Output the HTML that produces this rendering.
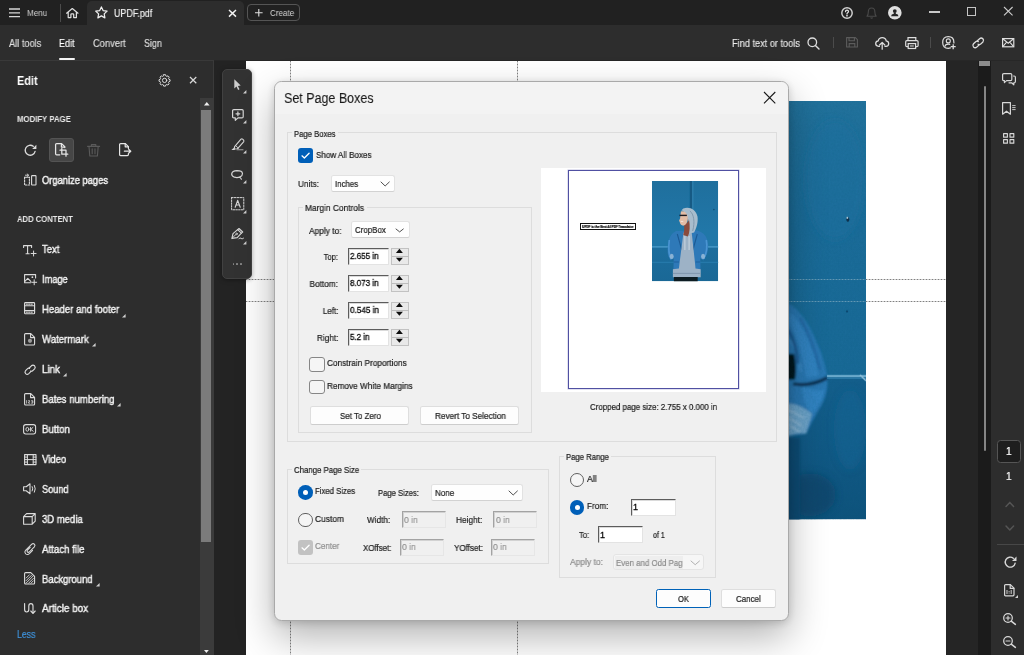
<!DOCTYPE html>
<html>
<head>
<meta charset="utf-8">
<title>Set Page Boxes</title>
<style>
*{box-sizing:border-box;margin:0;padding:0}
html,body{width:1024px;height:655px;overflow:hidden;background:#1f1f1f;font-family:"Liberation Sans",sans-serif;}
.abs{position:absolute}
#app{position:relative;width:1024px;height:655px;overflow:hidden;background:#1f1f1f}
.t{position:absolute;white-space:nowrap;line-height:1;color:#e6e6e6;will-change:transform}
svg{position:absolute;overflow:visible}
/* ---------- title bar ---------- */
#titlebar{left:0;top:0;width:1024px;height:25px;background:#212121}
#tab{left:87px;top:1px;width:157px;height:25px;background:#2d2d2d;border-radius:5px 5px 0 0}
#toolbar{left:0;top:25px;width:1024px;height:35px;background:#2d2d2d}
#tbline{left:0;top:60px;width:1024px;height:1px;background:linear-gradient(90deg,#393939 0,#393939 214px,#272727 214px,#272727 100%)}
/* ---------- left panel ---------- */
#left{left:0;top:61px;width:214px;height:594px;background:#2d2d2d;border-right:1px solid #3a3a3a}
#lscroll{left:200px;top:98px;width:14px;height:557px;background:#3b3b3b}
#lthumb{left:201px;top:110px;width:10px;height:432px;background:#7b7b7b}
.li{font-size:11px;color:#ececec;-webkit-text-stroke:0.25px #ececec}
.hd{font-size:9px;font-weight:bold;color:#e0e0e0;letter-spacing:0.1px}
/* ---------- document ---------- */
#gap{left:214px;top:61px;width:32px;height:594px;background:#232323}
#page{left:246px;top:61px;width:700px;height:594px;background:#fff}
#rgap{left:946px;top:61px;width:45px;height:594px;background:#252525}
#rtrack{left:978px;top:61px;width:13px;height:594px;background:#1b1b1b}
#rrail{left:991px;top:61px;width:33px;height:594px;background:#2d2d2d}
/* ---------- floating tools ---------- */
#ftools{left:222px;top:69px;width:30px;height:210px;background:#323232;border:1px solid #414141;border-radius:5px;box-shadow:0 1px 5px rgba(0,0,0,.35)}
/* ---------- dialog ---------- */
#dlg{left:274.4px;top:81px;width:514.2px;height:540px;background:#f0f0f0;border-radius:7.5px;border:1px solid #a9a9a9;box-shadow:0 16px 38px rgba(0,0,0,.30),0 2px 8px rgba(0,0,0,.16)}
#dlgtitle{left:0;top:0;width:512.2px;height:32px;background:#f3f3f3;border-radius:7px 7px 0 0}
.d{position:absolute;white-space:nowrap;line-height:1;color:#1a1a1a;font-size:9px}
.grp{border:1px solid #dddddd}
.inp{background:#fff;border:1px solid #e3e3e3;border-top-color:#5c5c5c;border-left-color:#5c5c5c;box-shadow:inset 1px 1px 0 #dadada}
.inp.dis{background:#f0f0f0;border-color:#e6e6e6;border-top-color:#a3a3a3;border-left-color:#a3a3a3;box-shadow:inset 1px 1px 0 #d2d2d2}
.sel{background:#fefefe;border:1px solid #e2e2e2;border-bottom-color:#d2d2d2;border-radius:2.5px}
.btn{background:#fdfdfd;border:1px solid #dedede;border-bottom-color:#cdcdcd;border-radius:2.5px}
.cb{border:1px solid #868686;border-radius:3px;background:#f5f5f5}
.spin{background:#e9e9e9;border:1px solid #c2c2c2}
</style>
</head>
<body>
<div id="app">
<!-- CHROME -->
<div id="titlebar" class="abs"></div>
<div id="tab" class="abs"></div>
<div id="toolbar" class="abs"></div>
<div id="tbline" class="abs"></div>
<div id="left" class="abs"></div>
<div id="lscroll" class="abs"></div>
<div id="lthumb" class="abs"></div>
<div id="gap" class="abs"></div>
<div id="page" class="abs"></div>
<div id="rgap" class="abs"></div>
<div id="rtrack" class="abs"></div>
<div id="rrail" class="abs"></div>
<svg style="left:9.40px;top:8.00px;" width="11" height="10" viewBox="0 0 11 10"><path d="M0 1 H11 M0 4.8 H11 M0 8.6 H11" stroke="#d6d6d6" stroke-width="1.3" fill="none"/></svg>
<div class="t" style="font-size:9.2px;color:#cfcfcf;top:9.01px;left:26.60px;transform-origin:0 50%;transform:scaleX(0.8821);">Menu</div>
<div class="abs " style="left:60.20px;top:4.40px;width:1.00px;height:17.20px;background:#4b4b4b"></div>
<svg style="left:65.60px;top:7.60px;" width="12.6" height="10.2" viewBox="0 0 12.6 10.2"><path d="M0.6 5.2 L6.3 0.6 L12 5.2 M2.2 4.2 V9.6 H4.9 V6.6 Q4.9 5.8 5.7 5.8 H6.9 Q7.7 5.8 7.7 6.6 V9.6 H10.4 V4.2" stroke="#dedede" stroke-width="1.25" fill="none" stroke-linejoin="round" stroke-linecap="round"/></svg>
<svg style="left:95.30px;top:6.40px;" width="12.8" height="12.4" viewBox="0 0 12.8 12.4"><path d="M6.4 0.9 L8.1 4.6 L12.1 5.1 L9.2 7.9 L9.9 11.9 L6.4 9.9 L2.9 11.9 L3.6 7.9 L0.7 5.1 L4.7 4.6 Z" stroke="#f0f0f0" stroke-width="1.25" fill="none" stroke-linejoin="round"/></svg>
<div class="t" style="font-size:10.2px;color:#f2f2f2;top:8.97px;left:114.00px;transform-origin:0 50%;transform:scaleX(0.8774);-webkit-text-stroke:0.15px #f2f2f2;">UPDF.pdf</div>
<svg style="left:228.80px;top:9.50px;" width="7" height="6.6" viewBox="0 0 7 6.6"><path d="M0 0 L7 6.6 M7 0 L0 6.6" stroke="#f0f0f0" stroke-width="1.5" fill="none"/></svg>
<div class="abs " style="left:247.20px;top:4.20px;width:53.10px;height:17.30px;border:1px solid #555;border-radius:4px;background:#212121"></div>
<svg style="left:254.70px;top:9.00px;" width="7.6" height="7.6" viewBox="0 0 7.6 7.6"><path d="M3.8 0 V7.6 M0 3.8 H7.6" stroke="#e0e0e0" stroke-width="1.1" fill="none"/></svg>
<div class="t" style="font-size:9.2px;color:#d6d6d6;top:9.01px;left:269.80px;transform-origin:0 50%;transform:scaleX(0.8764);">Create</div>
<svg style="left:840.90px;top:6.80px;" width="12" height="12" viewBox="0 0 12 12"><circle cx="6" cy="6" r="5.2" stroke="#d2d2d2" stroke-width="1.45" fill="none"/><path d="M4.5 4.7 Q4.5 3.2 6 3.2 Q7.5 3.2 7.5 4.5 Q7.5 5.3 6.6 5.8 Q6 6.2 6 6.9" stroke="#e2e2e2" stroke-width="1.3" fill="none" stroke-linecap="round"/><circle cx="6" cy="8.7" r="0.85" fill="#e2e2e2"/></svg>
<svg style="left:865.60px;top:7.00px;" width="11.2" height="12" viewBox="0 0 11.2 12"><path d="M1 9.2 Q2.3 8.2 2.3 5 Q2.3 1 5.6 1 Q8.9 1 8.9 5 Q8.9 8.2 10.2 9.2 Z" stroke="#4a4a4a" stroke-width="1.1" fill="none" stroke-linejoin="round"/><path d="M4.5 10.6 Q5.6 11.6 6.7 10.6" stroke="#4a4a4a" stroke-width="1.1" fill="none"/></svg>
<svg style="left:888.10px;top:5.70px;" width="13.6" height="13.6" viewBox="0 0 13.6 13.6"><circle cx="6.8" cy="6.8" r="6.8" fill="#e0e0e0"/><circle cx="6.8" cy="5.1" r="1.9" fill="#262626"/><path d="M5.8 6.4 H7.8 V7.7 Q10.5 8.1 10.5 10.2 H3.1 Q3.1 8.1 5.8 7.7 Z" fill="#262626"/></svg>
<div class="abs " style="left:929.30px;top:11.00px;width:11.00px;height:1.50px;background:#c8c8c8"></div>
<div class="abs " style="left:967.10px;top:6.60px;width:9.00px;height:9.00px;border:1.1px solid #c4c4c4"></div>
<svg style="left:1003.80px;top:7.30px;" width="8.6" height="8.4" viewBox="0 0 8.6 8.4"><path d="M0 0 L8.6 8.4 M8.6 0 L0 8.4" stroke="#cccccc" stroke-width="1.1" fill="none"/></svg>

<div class="t" style="font-size:10.2px;color:#e2e2e2;top:38.97px;left:9.00px;transform-origin:0 50%;transform:scaleX(0.9072);-webkit-text-stroke:0.12px #e2e2e2;">All tools</div>
<div class="t" style="font-size:10.2px;color:#ffffff;top:38.97px;left:59.40px;transform-origin:0 50%;transform:scaleX(0.8875);-webkit-text-stroke:0.12px #ffffff;">Edit</div>
<div class="abs " style="left:59.40px;top:58.00px;width:15.40px;height:2.20px;background:#f4f4f4;border-radius:1px"></div>
<div class="t" style="font-size:10.2px;color:#e2e2e2;top:38.97px;left:93.00px;transform-origin:0 50%;transform:scaleX(0.9184);-webkit-text-stroke:0.12px #e2e2e2;">Convert</div>
<div class="t" style="font-size:10.2px;color:#e2e2e2;top:38.97px;left:143.80px;transform-origin:0 50%;transform:scaleX(0.8768);-webkit-text-stroke:0.12px #e2e2e2;">Sign</div>
<div class="t" style="font-size:10.2px;color:#ececec;top:38.97px;left:731.70px;transform-origin:0 50%;transform:scaleX(0.9019);-webkit-text-stroke:0.12px #ececec;">Find text or tools</div>
<svg style="left:806.60px;top:36.60px;" width="13" height="13" viewBox="0 0 13 13"><circle cx="5.3" cy="5.3" r="4.3" stroke="#dedede" stroke-width="1.3" fill="none"/><path d="M8.4 8.4 L12 12" stroke="#dedede" stroke-width="1.4" stroke-linecap="round"/></svg>
<div class="abs " style="left:832.80px;top:36.70px;width:1.00px;height:11.40px;background:#4b4b4b"></div>
<svg style="left:845.80px;top:37.20px;" width="12" height="10.6" viewBox="0 0 12 10.6"><path d="M0.6 0.6 H9.4 L11.4 2.6 V10 H0.6 Z" stroke="#5c5c5c" stroke-width="1.1" fill="none" stroke-linejoin="round"/><path d="M3 0.8 V3.8 H8.4 V0.8 M3.2 10 V6.6 H8.8 V10" stroke="#5c5c5c" stroke-width="1.1" fill="none"/></svg>
<svg style="left:874.60px;top:37.20px;" width="14.4" height="12.6" viewBox="0 0 14.4 12.6"><path d="M4.4 9.4 H3.6 Q0.7 9.2 0.7 6.6 Q0.7 4.2 3.2 3.9 Q4 0.7 7.2 0.7 Q10.6 0.7 11.2 3.9 Q13.7 4.3 13.7 6.7 Q13.7 9.2 11 9.4 H10" stroke="#dedede" stroke-width="1.25" fill="none" stroke-linecap="round"/><path d="M7.2 12.2 V5.6 M4.6 8 L7.2 5.4 L9.8 8" stroke="#dedede" stroke-width="1.25" fill="none" stroke-linecap="round" stroke-linejoin="round"/></svg>
<svg style="left:904.90px;top:36.70px;" width="13.8" height="12.2" viewBox="0 0 13.8 12.2"><path d="M3 3.6 V0.7 H10.8 V3.6" stroke="#dedede" stroke-width="1.2" fill="none"/><rect x="0.7" y="3.6" width="12.4" height="6" rx="1.2" stroke="#dedede" stroke-width="1.2" fill="none"/><rect x="3.2" y="6.6" width="7.4" height="4.9" fill="#2d2d2d" stroke="#dedede" stroke-width="1.2"/><path d="M5 9 H8.8" stroke="#dedede" stroke-width="1"/></svg>
<div class="abs " style="left:929.60px;top:36.70px;width:1.00px;height:11.40px;background:#4b4b4b"></div>
<svg style="left:941.70px;top:36.30px;" width="13.6" height="13" viewBox="0 0 13.6 13"><path d="M8.4 11.9 Q7.4 12.3 6.3 12.3 Q0.7 12.3 0.7 6.5 Q0.7 0.7 6.3 0.7 Q11.9 0.7 11.9 6.5 V6.9" stroke="#dedede" stroke-width="1.2" fill="none" stroke-linecap="round"/><circle cx="6.3" cy="4.9" r="2" stroke="#dedede" stroke-width="1.1" fill="none"/><path d="M2.9 10.8 Q3.1 8.1 6.3 8.1 Q7.4 8.1 8.2 8.6" stroke="#dedede" stroke-width="1.1" fill="none"/><path d="M11.2 8.2 V13.2 M8.7 10.7 H13.7" stroke="#dedede" stroke-width="1.3"/></svg>
<svg style="left:972.30px;top:37.00px;" width="12.4" height="11.8" viewBox="0 0 12.4 11.8"><g stroke="#dedede" stroke-width="1.3" fill="none" stroke-linecap="round"><path d="M5.4 3.8 L7.6 1.7 Q9.3 0.3 10.9 1.8 Q12.3 3.4 10.9 5 L8.7 7.1 Q7.4 8.1 6.1 7.2"/><path d="M7 8 L4.8 10.1 Q3.1 11.5 1.5 10 Q0.1 8.4 1.5 6.8 L3.7 4.7 Q5 3.7 6.3 4.6"/></g></svg>
<svg style="left:1002.00px;top:37.50px;" width="12.4" height="9.4" viewBox="0 0 12.4 9.4"><rect x="0.6" y="0.6" width="11.2" height="8.2" stroke="#dedede" stroke-width="1.2" fill="none"/><path d="M0.8 0.8 L6.2 5.2 L11.6 0.8 M0.8 8.6 L4.6 4.2 M11.6 8.6 L7.8 4.2" stroke="#dedede" stroke-width="1.1" fill="none"/></svg>

<div class="t" style="font-size:12.0px;color:#ffffff;top:74.84px;left:17.20px;transform-origin:0 50%;transform:scaleX(0.9089);font-weight:bold;">Edit</div>
<svg style="left:158.20px;top:74.10px;" width="13.2" height="12.8" viewBox="-1.2 -0.2 15 15.4"><g stroke="#d8d8d8" stroke-width="1.2" fill="none" stroke-linecap="round" stroke-linejoin="round"><path d="M5.2 0.6 H7.4 L7.8 2.1 L9 2.7 L10.4 2 L11.9 3.6 L11.1 5 L11.5 6.2 L12.9 6.7 V8.5 L11.5 9 L11 10.2 L11.8 11.6 L10.3 13.1 L8.9 12.4 L7.8 12.9 L7.4 14.4 H5.2 L4.8 12.9 L3.6 12.4 L2.3 13.1 L0.8 11.6 L1.5 10.2 L1 9 L-0.4 8.5 V6.7 L1 6.2 L1.5 5 L0.8 3.6 L2.3 2 L3.6 2.7 L4.8 2.1 Z" /><circle cx="6.3" cy="7.5" r="2.6"/></g></svg>
<svg style="left:190.00px;top:77.10px;" width="6.3" height="6.3" viewBox="0 0 6.3 6.3"><path d="M0 0 L6.3 6.3 M6.3 0 L0 6.3" stroke="#d8d8d8" stroke-width="1.2" fill="none"/></svg>
<div class="t" style="font-size:8.8px;color:#e8e8e8;top:115.45px;left:17.20px;transform-origin:0 50%;transform:scaleX(0.8850);font-weight:bold;">MODIFY PAGE</div>
<svg style="left:23.50px;top:144.30px;" width="12.6" height="12" viewBox="0 0 12.6 12"><g stroke="#dcdcdc" stroke-width="1.3" fill="none" stroke-linecap="round" stroke-linejoin="round"><path d="M11.1 7.4 A5 5 0 1 1 9.3 2.3"/></g><path d="M8.2 4.9 L12.4 0.7 V4.9 Z" fill="#dcdcdc"/></svg>
<div class="abs " style="left:48.70px;top:138.00px;width:25.20px;height:23.70px;background:#464646;border:1px solid #545454;border-radius:3px"></div>
<svg style="left:55.00px;top:142.80px;" width="13.2" height="13.8" viewBox="0 0 13.2 13.8"><g stroke="#e6e6e6" stroke-width="1.25" fill="none" stroke-linecap="round" stroke-linejoin="round"><path d="M4.8 11.8 H1.6 Q0.6 11.8 0.6 10.8 V1.6 Q0.6 0.6 1.6 0.6 H6.6 L9.8 3.8 V4.6"/><path d="M6.4 0.8 V4 H9.6"/><path d="M6.8 5.4 V11.2 H12.8 M5 7.2 H11 V13.2" stroke-width="1.25"/></g></svg>
<svg style="left:86.50px;top:143.50px;" width="13.2" height="12.6" viewBox="0 0 13.2 12.6"><g stroke="#5a5a5a" stroke-width="1.1" fill="none" stroke-linecap="round" stroke-linejoin="round"><path d="M0.6 2.4 H12.6 M4.4 2.2 V0.6 H8.8 V2.2 M2 2.6 L2.8 12 H10.4 L11.2 2.6 M5.2 4.8 V9.8 M8 4.8 V9.8"/></g></svg>
<svg style="left:119.00px;top:142.80px;" width="12.8" height="13.2" viewBox="0 0 12.8 13.2"><g stroke="#e6e6e6" stroke-width="1.2" fill="none" stroke-linecap="round" stroke-linejoin="round"><path d="M9.4 10.6 V11.6 Q9.4 12.6 8.4 12.6 H1.6 Q0.6 12.6 0.6 11.6 V1.6 Q0.6 0.6 1.6 0.6 H6.4 L9.4 3.6 V5.6"/><path d="M6.2 0.8 V3.8 H9.2"/><path d="M5.4 8.2 H11.6 M9.8 6.4 L11.8 8.2 L9.8 10" stroke-width="1.25"/></g></svg>
<svg style="left:23.50px;top:174.30px;" width="12.6" height="11.6" viewBox="0 0 12.6 11.6"><g stroke="#dcdcdc" stroke-width="1.1" fill="none" stroke-linecap="round" stroke-linejoin="round"><rect x="7.6" y="1.6" width="4.4" height="9.4" rx="0.6"/><path d="M0.6 3.4 V11 H5.4 V3.4" stroke-dasharray="1.5 1.3"/><path d="M0.6 3.2 H5.4"/><path d="M1.4 1.2 H4.4 M3.2 0 L4.6 1.2 L3.2 2.4" stroke-width="0.9"/></g></svg>
<div class="t" style="font-size:10.4px;color:#f4f4f4;top:176.00px;left:42.00px;transform-origin:0 50%;transform:scaleX(0.8989);-webkit-text-stroke:0.45px #f4f4f4;">Organize pages</div>
<div class="t" style="font-size:8.8px;color:#e8e8e8;top:215.15px;left:17.20px;transform-origin:0 50%;transform:scaleX(0.8713);font-weight:bold;">ADD CONTENT</div>
<div class="t" style="font-size:10.4px;color:#f4f4f4;top:245.30px;left:42.40px;transform-origin:0 50%;transform:scaleX(0.9123);-webkit-text-stroke:0.4px #f4f4f4;">Text</div>
<div class="t" style="font-size:10.4px;color:#f4f4f4;top:275.10px;left:42.40px;transform-origin:0 50%;transform:scaleX(0.8926);-webkit-text-stroke:0.4px #f4f4f4;">Image</div>
<div class="t" style="font-size:10.4px;color:#f4f4f4;top:305.20px;left:42.40px;transform-origin:0 50%;transform:scaleX(0.9220);-webkit-text-stroke:0.4px #f4f4f4;">Header and footer</div>
<svg style="left:122.40px;top:313.60px;" width="3.5999999999999943" height="3.599999999999966" viewBox="0 0 3.5999999999999943 3.599999999999966"><path d="M3.5999999999999943 0 V3.599999999999966 H0 Z" fill="#d0d0d0"/></svg>
<div class="t" style="font-size:10.4px;color:#f4f4f4;top:334.80px;left:42.40px;transform-origin:0 50%;transform:scaleX(0.9274);-webkit-text-stroke:0.4px #f4f4f4;">Watermark</div>
<svg style="left:91.70px;top:343.20px;" width="3.5999999999999943" height="3.599999999999966" viewBox="0 0 3.5999999999999943 3.599999999999966"><path d="M3.5999999999999943 0 V3.599999999999966 H0 Z" fill="#d0d0d0"/></svg>
<div class="t" style="font-size:10.4px;color:#f4f4f4;top:365.00px;left:42.40px;transform-origin:0 50%;transform:scaleX(0.9487);-webkit-text-stroke:0.4px #f4f4f4;">Link</div>
<svg style="left:62.60px;top:373.40px;" width="3.6000000000000014" height="3.599999999999966" viewBox="0 0 3.6000000000000014 3.599999999999966"><path d="M3.6000000000000014 0 V3.599999999999966 H0 Z" fill="#d0d0d0"/></svg>
<div class="t" style="font-size:10.4px;color:#f4f4f4;top:395.00px;left:42.40px;transform-origin:0 50%;transform:scaleX(0.9233);-webkit-text-stroke:0.4px #f4f4f4;">Bates numbering</div>
<svg style="left:117.20px;top:403.40px;" width="3.5999999999999943" height="3.599999999999966" viewBox="0 0 3.5999999999999943 3.599999999999966"><path d="M3.5999999999999943 0 V3.599999999999966 H0 Z" fill="#d0d0d0"/></svg>
<div class="t" style="font-size:10.4px;color:#f4f4f4;top:424.80px;left:42.40px;transform-origin:0 50%;transform:scaleX(0.9279);-webkit-text-stroke:0.4px #f4f4f4;">Button</div>
<div class="t" style="font-size:10.4px;color:#f4f4f4;top:454.70px;left:42.40px;transform-origin:0 50%;transform:scaleX(0.9238);-webkit-text-stroke:0.4px #f4f4f4;">Video</div>
<div class="t" style="font-size:10.4px;color:#f4f4f4;top:484.70px;left:42.40px;transform-origin:0 50%;transform:scaleX(0.8812);-webkit-text-stroke:0.4px #f4f4f4;">Sound</div>
<div class="t" style="font-size:10.4px;color:#f4f4f4;top:514.70px;left:42.40px;transform-origin:0 50%;transform:scaleX(0.9144);-webkit-text-stroke:0.4px #f4f4f4;">3D media</div>
<div class="t" style="font-size:10.4px;color:#f4f4f4;top:544.50px;left:42.40px;transform-origin:0 50%;transform:scaleX(0.9328);-webkit-text-stroke:0.4px #f4f4f4;">Attach file</div>
<div class="t" style="font-size:10.4px;color:#f4f4f4;top:574.50px;left:42.40px;transform-origin:0 50%;transform:scaleX(0.9116);-webkit-text-stroke:0.4px #f4f4f4;">Background</div>
<svg style="left:95.50px;top:582.90px;" width="3.5999999999999943" height="3.6000000000000227" viewBox="0 0 3.5999999999999943 3.6000000000000227"><path d="M3.5999999999999943 0 V3.6000000000000227 H0 Z" fill="#d0d0d0"/></svg>
<div class="t" style="font-size:10.4px;color:#f4f4f4;top:604.30px;left:42.40px;transform-origin:0 50%;transform:scaleX(0.9515);-webkit-text-stroke:0.4px #f4f4f4;">Article box</div>
<svg style="left:23.10px;top:244.50px;" width="13.6" height="11.2" viewBox="0 0 13.6 11.2"><g stroke="#dcdcdc" stroke-width="1.1" fill="none" stroke-linecap="round" stroke-linejoin="round"><path d="M0.6 2.4 V0.6 H8.6 V2.4 M4.6 0.6 V8.8 M3 8.8 H6.2"/><path d="M10.6 6 V11 M8.1 8.5 H13.1" stroke-width="1"/></g></svg>
<svg style="left:23.50px;top:273.90px;" width="12.6" height="11.2" viewBox="0 0 12.6 11.2"><g stroke="#dcdcdc" stroke-width="1.1" fill="none" stroke-linecap="round" stroke-linejoin="round"><path d="M6.6 8.8 H0.6 V0.6 H11.6 V4"/><path d="M0.8 7.4 L3.8 4.4 L6.8 7.4" /><circle cx="8.4" cy="3.2" r="0.9" fill="#dcdcdc" stroke="none"/><path d="M10.2 5.8 V10.8 M7.7 8.3 H12.7" stroke-width="1"/></g></svg>
<svg style="left:24.10px;top:302.20px;" width="11.2" height="12.4" viewBox="0 0 11.2 12.4"><g stroke="#dcdcdc" stroke-width="1.15" fill="none" stroke-linecap="round" stroke-linejoin="round"><rect x="0.6" y="0.6" width="10" height="11.2" rx="0.8"/><path d="M0.8 3.8 H10.4 M0.8 8.6 H10.4"/><path d="M2.2 2.2 H9.4 M2.2 10.2 H9.4" stroke-dasharray="1.3 1.1" stroke-width="1"/></g></svg>
<svg style="left:24.10px;top:332.50px;" width="11.2" height="12.6" viewBox="0 0 11.2 12.6"><g stroke="#dcdcdc" stroke-width="1.1" fill="none" stroke-linecap="round" stroke-linejoin="round"><path d="M0.6 1.6 Q0.6 0.6 1.6 0.6 H6.8 L10.6 4.4 V11 Q10.6 12 9.6 12 H1.6 Q0.6 12 0.6 11 Z"/><path d="M6.6 0.8 V4.6 H10.4"/><circle cx="6" cy="7.8" r="2.1" fill="#9c9c9c" stroke="none"/></g></svg>
<svg style="left:23.50px;top:363.60px;" width="12.2" height="11.4" viewBox="0 0 12.2 11.4"><g stroke="#dcdcdc" stroke-width="1.15" fill="none" stroke-linecap="round" stroke-linejoin="round"><path d="M5.2 4 L7.4 1.8 Q9 0.4 10.6 1.8 Q11.9 3.3 10.6 4.8 L8.6 6.8 Q7.6 7.6 6.6 7"/><path d="M7 7.4 L4.8 9.6 Q3.2 11 1.6 9.6 Q0.3 8.1 1.6 6.6 L3.6 4.6 Q4.6 3.8 5.6 4.4"/></g></svg>
<svg style="left:24.10px;top:392.80px;" width="11.2" height="12.6" viewBox="0 0 11.2 12.6"><g stroke="#dcdcdc" stroke-width="1.1" fill="none" stroke-linecap="round" stroke-linejoin="round"><path d="M0.6 1.6 Q0.6 0.6 1.6 0.6 H6.8 L10.6 4.4 V11 Q10.6 12 9.6 12 H1.6 Q0.6 12 0.6 11 Z"/><path d="M6.6 0.8 V4.6 H10.4"/><path d="M2.6 7.6 V10.2 M4.6 7.6 H5.6 V8.9 H4.6 V10.2 H5.8 M7.6 7.6 H8.8 V10.2 H7.6 M7.8 8.9 H8.8" stroke-width="0.75"/></g></svg>
<svg style="left:23.10px;top:423.80px;" width="13.2" height="10.6" viewBox="0 0 13.2 10.6"><g stroke="#dcdcdc" stroke-width="1.1" fill="none" stroke-linecap="round" stroke-linejoin="round"><rect x="0.6" y="0.6" width="12" height="9.4" rx="2.2"/><ellipse cx="4.4" cy="5.3" rx="1.5" ry="1.9" stroke-width="0.95"/><path d="M7.6 3.4 V7.2 M10 3.4 L7.8 5.4 L10.2 7.2" stroke-width="0.95"/></g></svg>
<svg style="left:23.50px;top:453.60px;" width="12.6" height="11.2" viewBox="0 0 12.6 11.2"><g stroke="#dcdcdc" stroke-width="1.1" fill="none" stroke-linecap="round" stroke-linejoin="round"><rect x="0.6" y="0.6" width="11.4" height="10"/><path d="M3.4 0.6 V10.6 M9.2 0.6 V10.6 M3.4 5.6 H9.2 M0.6 3.1 H3.4 M0.6 5.6 H3.4 M0.6 8.1 H3.4 M9.2 3.1 H12 M9.2 5.6 H12 M9.2 8.1 H12" stroke-width="1"/></g></svg>
<svg style="left:23.10px;top:483.00px;" width="13.6" height="11.6" viewBox="0 0 13.6 11.6"><g stroke="#dcdcdc" stroke-width="1.1" fill="none" stroke-linecap="round" stroke-linejoin="round"><path d="M0.6 3.8 H3.2 L7 0.8 V10.8 L3.2 7.8 H0.6 Z"/><path d="M9.2 3.6 Q10.4 5.8 9.2 8 M11.4 2.4 Q13.2 5.8 11.4 9.2" stroke-width="1"/></g></svg>
<svg style="left:23.10px;top:512.90px;" width="13" height="11.8" viewBox="0 0 13 11.8"><g stroke="#dcdcdc" stroke-width="1.1" fill="none" stroke-linecap="round" stroke-linejoin="round"><path d="M0.6 3.6 H9.2 V11.2 H0.6 Z M0.6 3.6 L3.6 0.6 H12.2 L9.2 3.6 M12.2 0.6 V8.2 L9.2 11.2"/></g></svg>
<svg style="left:23.50px;top:542.90px;" width="12.2" height="12" viewBox="0 0 12.2 12"><g stroke="#dcdcdc" stroke-width="1.05" fill="none" stroke-linecap="round" stroke-linejoin="round"><path d="M6.2 4.4 L3.4 7.2 Q2.6 8.2 3.4 9 Q4.3 9.7 5.2 9 L10.4 3.8 Q11.6 2.4 10.4 1.2 Q9.1 0.1 7.8 1.2 L1.8 7.2 Q0 9.2 1.8 10.8 Q3.6 12.2 5.4 10.6 L8.6 7.4"/></g></svg>
<svg style="left:24.10px;top:572.20px;" width="11.2" height="12.6" viewBox="0 0 11.2 12.6"><g stroke="#dcdcdc" stroke-width="1.1" fill="none" stroke-linecap="round" stroke-linejoin="round"><path d="M0.6 1.6 Q0.6 0.6 1.6 0.6 H6.8 L10.6 4.4 V11 Q10.6 12 9.6 12 H1.6 Q0.6 12 0.6 11 Z"/><path d="M2.2 6 L5.4 2.8 M2.2 8.6 L7.4 3.4 M2.2 11 L9.2 4 M4.6 11.2 L9.4 6.4 M7 11.2 L9.4 8.8" stroke-width="0.9"/></g></svg>
<svg style="left:23.50px;top:603.30px;" width="12.6" height="11" viewBox="0 0 12.6 11"><g stroke="#dcdcdc" stroke-width="1.15" fill="none" stroke-linecap="round" stroke-linejoin="round"><path d="M0.6 0.6 V6.6 Q0.6 9 2.7 9 Q4.8 9 4.8 6.6 V3 Q4.8 0.6 6.9 0.6 Q9 0.6 9 3 V10"/><path d="M6.8 8 L9 10.4 L11.2 8"/></g></svg>
<div class="t" style="font-size:10.4px;color:#3f93dc;top:630.10px;left:17.20px;transform-origin:0 50%;transform:scaleX(0.8421);-webkit-text-stroke:0.2px #3f93dc;">Less</div>
<svg style="left:203.60px;top:102.20px;" width="5.6" height="3.4" viewBox="0 0 5.6 3.4"><path d="M0 3.4 L2.8 0 L5.6 3.4 Z" fill="#f0f0f0"/></svg>
<svg style="left:204.40px;top:649.80px;" width="4.8" height="2.9" viewBox="0 0 4.8 2.9"><path d="M0 0 L2.4 2.9 L4.8 0 Z" fill="#f0f0f0"/></svg>

<svg style="left:700.00px;top:101.20px;" width="166" height="418.4" viewBox="700 101.2 166 418.4">
<defs>
<linearGradient id="pg" x1="0" y1="0" x2="0" y2="1">
<stop offset="0" stop-color="#22729c"/><stop offset="0.3" stop-color="#1b6c99"/><stop offset="0.655" stop-color="#186996"/><stop offset="0.665" stop-color="#145f8c"/><stop offset="0.85" stop-color="#115985"/><stop offset="1" stop-color="#0e537c"/>
</linearGradient>
<filter id="bl" x="-20%" y="-20%" width="140%" height="140%"><feGaussianBlur stdDeviation="1.1"/></filter>
<filter id="bl3" x="-30%" y="-30%" width="160%" height="160%"><feGaussianBlur stdDeviation="3.5"/></filter>
<filter id="bl2" x="-20%" y="-20%" width="140%" height="140%"><feGaussianBlur stdDeviation="0.6"/></filter>
<filter id="gr" x="0" y="0" width="100%" height="100%"><feTurbulence type="fractalNoise" baseFrequency="0.55" numOctaves="2" seed="4" result="n"/><feColorMatrix in="n" type="matrix" values="0 0 0 0 0  0 0 0 0 0.1  0 0 0 0 0.18  0 0 0 0.55 -0.2"/></filter>
<clipPath id="pc"><rect x="700" y="101.2" width="166" height="418.4"/></clipPath>
</defs>
<g clip-path="url(#pc)">
<rect x="700" y="101.2" width="166" height="418.4" fill="url(#pg)"/>
<g filter="url(#bl3)">
<ellipse cx="835" cy="180" rx="30" ry="60" fill="#1e6f9f" opacity="0.6"/>
<ellipse cx="810" cy="495" rx="26" ry="22" fill="#0b4468" opacity="0.7"/>
<ellipse cx="850" cy="430" rx="16" ry="40" fill="#176596" opacity="0.5"/>
</g>
<g filter="url(#bl)">
<path d="M770 300 L788 303 C797 308 806 320 812 332 C818 345 824 358 827 375 C828.5 388 826 398 820 408 C815 416 810 426 806 434 L770 438 Z" fill="#2a78b4"/>
<path d="M790 312 C800 322 808 338 813 352 C816 362 818 370 818 376 L806 378 C804 360 798 338 789 322 Z" fill="#3787c6" opacity="0.75"/>
<path d="M800 318 C808 332 815 350 820 370" stroke="#1c5d98" stroke-width="2" fill="none" opacity="0.7"/>
<path d="M790 340 C796 350 800 362 801 372" stroke="#4a98d4" stroke-width="1.6" fill="none" opacity="0.7"/>
<path d="M806 392 C812 398 816 402 818 406" stroke="#1a5a94" stroke-width="2" fill="none" opacity="0.7"/>
<path d="M788 330 C794 340 797 352 798 364" stroke="#174f85" stroke-width="3" fill="none" opacity="0.8"/>
<path d="M802 386 C810 390 818 392 824 390 C823 400 818 408 812 414 C806 408 802 398 802 386 Z" fill="#3485c3" opacity="0.9"/>
<path d="M780 354 H794 Q797 366 795 380 H780 Z" fill="#06121f"/>
<path d="M793 384 C804 386 816 384 827 378" stroke="#082a49" stroke-width="3.2" fill="none"/>
<path d="M780 404 C792 402 802 406 812 414 L806 434 C798 432 790 436 780 438 Z" fill="#6ea4ca"/>
<path d="M788 410 L804 418 M788 418 L802 426 M790 426 L800 432" stroke="#a9cce2" stroke-width="1.3" fill="none" opacity="0.8"/>
<path d="M780 438 H800 V520 H780 Z" fill="#0d4b74" opacity="0.9"/>
</g>
<rect x="700" y="101.2" width="166" height="418.4" filter="url(#gr)" opacity="0.5"/>
<g filter="url(#bl2)">
<path d="M827 376.2 H866" stroke="#79b4d4" stroke-width="2"/>
<path d="M827 378.4 H866" stroke="#2d7caa" stroke-width="1.4"/>
<path d="M860 375 L866 381" stroke="#8fc0da" stroke-width="1.4"/>
<ellipse cx="847.8" cy="219.6" rx="1.5" ry="2.4" fill="#0d2f48"/>
<circle cx="847.3" cy="218" r="0.9" fill="#c6dbe8"/>
<circle cx="847" cy="311.6" r="1.1" fill="#0f466d"/>
</g>
</g></svg>
<div class="abs " style="left:290.20px;top:61.00px;width:1.00px;height:594.00px;background:repeating-linear-gradient(180deg,#808080 0 1px,#cdcdcd 1px 3px)"></div>
<div class="abs " style="left:517.00px;top:61.00px;width:1.00px;height:594.00px;background:repeating-linear-gradient(180deg,#808080 0 1px,#cdcdcd 1px 3px)"></div>
<div class="abs " style="left:246.00px;top:279.40px;width:542.00px;height:1.00px;background:repeating-linear-gradient(90deg,#808080 0 1px,#cdcdcd 1px 3px)"></div>
<div class="abs " style="left:246.00px;top:301.40px;width:542.00px;height:1.00px;background:repeating-linear-gradient(90deg,#808080 0 1px,#cdcdcd 1px 3px)"></div>
<div class="abs " style="left:866.00px;top:279.40px;width:80.00px;height:1.00px;background:repeating-linear-gradient(90deg,#808080 0 1px,#cdcdcd 1px 3px)"></div>
<div class="abs " style="left:866.00px;top:301.40px;width:80.00px;height:1.00px;background:repeating-linear-gradient(90deg,#808080 0 1px,#cdcdcd 1px 3px)"></div>
<div class="abs " style="left:788.00px;top:279.40px;width:78.00px;height:1.00px;background:repeating-linear-gradient(90deg,rgba(160,190,205,.55) 0 1px,rgba(160,190,205,.25) 1px 3px)"></div>
<div class="abs " style="left:788.00px;top:301.40px;width:78.00px;height:1.00px;background:repeating-linear-gradient(90deg,rgba(160,190,205,.55) 0 1px,rgba(160,190,205,.25) 1px 3px)"></div>

<div class="abs " style="left:978.60px;top:61.00px;width:11.60px;height:5.30px;background:#8c8c8c"></div>
<div class="abs " style="left:984.30px;top:86.00px;width:1.50px;height:365.40px;background:#858585;border-radius:1px"></div>
<svg style="left:1001.90px;top:73.00px;" width="14" height="12.8" viewBox="0 0 14 12.8"><g stroke="#d8d8d8" stroke-width="1.2" fill="none" stroke-linecap="round" stroke-linejoin="round"><path d="M0.6 1.8 Q0.6 0.6 1.8 0.6 H8.6 Q9.8 0.6 9.8 1.8 V6.4 Q9.8 7.6 8.6 7.6 H4.6 L2.4 9.6 V7.6 H1.8 Q0.6 7.6 0.6 6.4 Z"/><path d="M11.6 3 H12.2 Q13.4 3 13.4 4.2 V8.6 Q13.4 9.8 12.2 9.8 H11.8 V11.8 L9.6 9.8 H7"/></g></svg>
<svg style="left:1002.30px;top:102.00px;" width="13.6" height="13" viewBox="0 0 13.6 13"><g stroke="#d8d8d8" stroke-width="1.2" fill="none" stroke-linecap="round" stroke-linejoin="round"><path d="M0.6 0.6 H8.4 V12.2 L4.5 9.2 L0.6 12.2 Z"/><path d="M10.6 3.6 H13.2 M10.6 5.6 H13.2 M10.6 7.6 H13.2" stroke-width="0.9"/></g></svg>
<svg style="left:1003.40px;top:132.50px;" width="11.4" height="10.8" viewBox="0 0 11.4 10.8"><g stroke="#d8d8d8" stroke-width="1.15" fill="none" stroke-linecap="round" stroke-linejoin="round"><rect x="0.6" y="0.6" width="3.8" height="3.6"/><rect x="7" y="0.6" width="3.8" height="3.6"/><rect x="0.6" y="6.6" width="3.8" height="3.6"/><rect x="7" y="6.6" width="3.8" height="3.6"/></g></svg>
<div class="abs " style="left:997.00px;top:439.80px;width:23.80px;height:23.00px;background:#1e1e1e;border:1px solid #555;border-radius:3.5px"></div>
<div class="t" style="font-size:10.2px;color:#ffffff;top:447.27px;left:1006.00px;transform-origin:0 50%;-webkit-text-stroke:0.2px #ffffff;">1</div>
<div class="t" style="font-size:10.2px;color:#f4f4f4;top:472.07px;left:1006.00px;transform-origin:0 50%;-webkit-text-stroke:0.2px #f4f4f4;">1</div>
<svg style="left:1006.00px;top:502.30px;" width="7.6" height="4.4" viewBox="0 0 7.6 4.4"><path d="M0 4.4 L3.8 0.4 L7.6 4.4" stroke="#555" stroke-width="1.5" fill="none" stroke-linejoin="round" stroke-linecap="round"/></svg>
<svg style="left:1006.00px;top:525.70px;" width="7.6" height="4.4" viewBox="0 0 7.6 4.4"><path d="M0 0 L3.8 4 L7.6 0" stroke="#555" stroke-width="1.5" fill="none" stroke-linejoin="round" stroke-linecap="round"/></svg>
<div class="abs " style="left:996.70px;top:544.00px;width:27.30px;height:1.00px;background:#474747"></div>
<svg style="left:1003.70px;top:556.40px;" width="12.6" height="11.8" viewBox="0 0 12.6 11.8"><g stroke="#d8d8d8" stroke-width="1.4" fill="none" stroke-linecap="round" stroke-linejoin="round"><path d="M11.1 7.3 A5 5 0 1 1 9.3 2.2"/></g><path d="M8.0 5 L12.5 0.5 V5 Z" fill="#d8d8d8"/></svg>
<svg style="left:1004.00px;top:583.80px;" width="10.6" height="12.4" viewBox="0 0 10.6 12.4"><g stroke="#d8d8d8" stroke-width="1.2" fill="none" stroke-linecap="round" stroke-linejoin="round"><path d="M0.6 1.6 Q0.6 0.6 1.6 0.6 H6.4 L10 4.2 V10.8 Q10 11.8 9 11.8 H1.6 Q0.6 11.8 0.6 10.8 Z"/><path d="M6.2 0.8 V4.4 H9.8"/><path d="M3 6.4 V9.6 M7.2 6.4 V9.6 M5.1 7.4 V7.5 M5.1 9 V9.1" stroke-width="0.95"/></g></svg>
<svg style="left:1014.60px;top:595.20px;" width="3.0" height="3.0" viewBox="0 0 3.0 3.0"><path d="M3.0 0 V3.0 H0 Z" fill="#d0d0d0"/></svg>
<svg style="left:1003.40px;top:613.00px;" width="13.4" height="12" viewBox="0 0 13.4 12"><g stroke="#d8d8d8" stroke-width="1.25" fill="none" stroke-linecap="round" stroke-linejoin="round"><circle cx="5" cy="5" r="4.3"/><path d="M8.2 8.2 L12.4 11.4" stroke-width="1.5"/><path d="M5 3 V7 M3 5 H7" stroke-width="1.1"/></g></svg>
<svg style="left:1003.40px;top:636.30px;" width="13.4" height="12" viewBox="0 0 13.4 12"><g stroke="#d8d8d8" stroke-width="1.25" fill="none" stroke-linecap="round" stroke-linejoin="round"><circle cx="5" cy="5" r="4.3"/><path d="M8.2 8.2 L12.4 11.4" stroke-width="1.5"/><path d="M3 5 H7" stroke-width="1.1"/></g></svg>

<div id="ftools" class="abs"></div>
<svg style="left:234.20px;top:78.80px;" width="7" height="11" viewBox="0 0 7 11"><path d="M0.3 0.2 L6.7 6.6 L3.9 6.9 L5.5 10.2 L4.1 10.9 L2.5 7.5 L0.3 9.4 Z" fill="#cdcdcd"/></svg>
<svg style="left:242.90px;top:90.20px;" width="3.4" height="3.4" viewBox="0 0 3.4 3.4"><path d="M3.4 0 V3.4 H0 Z" fill="#cfcfcf"/></svg>
<svg style="left:231.60px;top:109.20px;" width="12" height="12" viewBox="0 0 12 12"><g stroke="#d6d6d6" stroke-width="1.2" fill="none" stroke-linecap="round" stroke-linejoin="round"><path d="M0.6 1.8 Q0.6 0.6 1.8 0.6 H10 Q11.2 0.6 11.2 1.8 V7.7 Q11.2 8.9 10 8.9 H6 L3.3 11.3 V8.9 H1.8 Q0.6 8.9 0.6 7.7 Z"/><path d="M5.9 2.9 V6.7 M4 4.8 H7.8" stroke-width="1.2"/></g></svg>
<svg style="left:242.90px;top:120.00px;" width="3.4" height="3.4" viewBox="0 0 3.4 3.4"><path d="M3.4 0 V3.4 H0 Z" fill="#cfcfcf"/></svg>
<svg style="left:230.80px;top:138.00px;" width="13.6" height="12.4" viewBox="0 0 13.6 12.4"><g stroke="#d6d6d6" stroke-width="1.15" fill="none" stroke-linecap="round" stroke-linejoin="round"><path d="M3.6 8.6 L10 1.2 Q10.8 0.4 11.6 1.2 L12.6 2.2 Q13.2 3 12.6 3.8 L6.4 10.8 L3.2 11 Z"/><path d="M4.6 7.6 L7.4 10.2" stroke-width="0.9"/></g><path d="M0.4 12 L2.6 10 L4 11.4 L3.4 12 Z" fill="#d6d6d6"/><path d="M5.6 11.7 H12.4" stroke="#8c8c8c" stroke-width="1.3"/></svg>
<svg style="left:242.90px;top:150.20px;" width="3.4" height="3.4" viewBox="0 0 3.4 3.4"><path d="M3.4 0 V3.4 H0 Z" fill="#cfcfcf"/></svg>
<svg style="left:230.50px;top:169.80px;" width="12.2" height="9.8" viewBox="0 0 12.2 9.8"><g stroke="#d6d6d6" stroke-width="1.2" fill="none" stroke-linecap="round" stroke-linejoin="round"><path d="M9.2 6.9 Q6.4 8 3.4 7.2 Q0.5 6.2 0.7 3.9 Q1.1 1 6 0.7 Q11.2 0.7 11.5 3.5 Q11.5 5.8 9.2 6.9 Z"/><path d="M8.4 7.2 Q9.6 7.6 10.4 9.2"/></g></svg>
<svg style="left:242.90px;top:180.20px;" width="3.4" height="3.4" viewBox="0 0 3.4 3.4"><path d="M3.4 0 V3.4 H0 Z" fill="#cfcfcf"/></svg>
<svg style="left:230.50px;top:197.30px;" width="13.4" height="13.4" viewBox="0 0 13.4 13.4"><g stroke="#d6d6d6" stroke-width="1.15" fill="none" stroke-linecap="round" stroke-linejoin="round"><rect x="0.6" y="0.6" width="12.2" height="12.2" stroke-dasharray="1.6 1.2" stroke-width="1"/><path d="M4.2 10.2 L6.7 3.4 L9.2 10.2 M5.1 8 H8.3" stroke-width="1.15"/></g></svg>
<svg style="left:242.90px;top:210.10px;" width="3.4" height="3.4" viewBox="0 0 3.4 3.4"><path d="M3.4 0 V3.4 H0 Z" fill="#cfcfcf"/></svg>
<svg style="left:230.50px;top:228.20px;" width="13.4" height="12.4" viewBox="0 0 13.4 12.4"><g stroke="#d6d6d6" stroke-width="1.15" fill="none" stroke-linecap="round" stroke-linejoin="round"><path d="M0.9 10.4 L2 5.6 L6.6 1.6 L10.4 5.2 L6.2 9.6 Z"/><path d="M6.6 1.6 L8 0.5 L11.7 4 L10.4 5.2"/><path d="M1.1 10.2 L5 6.4" stroke-width="0.95"/><circle cx="5.6" cy="5.9" r="0.8" stroke-width="0.8"/><path d="M7.8 10.9 Q9 9 10 10.4 Q10.8 11.6 12.6 10.2" stroke-width="0.95"/></g></svg>
<svg style="left:242.90px;top:240.50px;" width="3.4" height="3.4" viewBox="0 0 3.4 3.4"><path d="M3.4 0 V3.4 H0 Z" fill="#cfcfcf"/></svg>
<div class="abs" style="left:232.6px;top:262.9px;width:1.7px;height:1.7px;border-radius:50%;background:#8a8a8a"></div>
<div class="abs" style="left:236.39999999999998px;top:262.9px;width:1.7px;height:1.7px;border-radius:50%;background:#8a8a8a"></div>
<div class="abs" style="left:240.2px;top:262.9px;width:1.7px;height:1.7px;border-radius:50%;background:#8a8a8a"></div>

<div id="dlg" class="abs">
<div id="dlgtitle" class="abs"></div>
</div>
<div class="t" style="font-size:15.2px;color:#1a1a1a;top:89.63px;left:284.20px;transform-origin:0 50%;transform:scaleX(0.8220);-webkit-text-stroke:0.1px #1a1a1a;">Set Page Boxes</div>
<svg style="left:764.10px;top:92.00px;" width="11.3" height="11.3" viewBox="0 0 11.3 11.3"><path d="M0 0 L11.3 11.3 M11.3 0 L0 11.3" stroke="#1a1a1a" stroke-width="1.1" fill="none"/></svg>
<div class="abs grp" style="left:287.30px;top:132.00px;width:489.70px;height:310.00px;"></div>
<div class="abs " style="left:291.60px;top:131.00px;width:46.00px;height:3.00px;background:#f0f0f0"></div>
<div class="t" style="font-size:9.0px;color:#1c1c1c;top:129.58px;left:293.60px;transform-origin:0 50%;transform:scaleX(0.8551);-webkit-text-stroke:0.22px #1c1c1c;">Page Boxes</div>
<div class="abs " style="left:298.10px;top:148.10px;width:14.80px;height:14.80px;background:#005fb8;border-radius:3px"></div>
<svg style="left:298.10px;top:148.10px;" width="14.799999999999955" height="14.799999999999955" viewBox="0 0 14.799999999999955 14.799999999999955"><path d="M4.00 7.84 L6.36 10.06 L11.10 5.18" fill="none" stroke="#fff" stroke-width="1.3" stroke-linecap="round" stroke-linejoin="round"/></svg>
<div class="t" style="font-size:9.0px;color:#1c1c1c;top:150.78px;left:315.50px;transform-origin:0 50%;transform:scaleX(0.8947);-webkit-text-stroke:0.22px #1c1c1c;">Show All Boxes</div>
<div class="t" style="font-size:9.0px;color:#1c1c1c;top:179.98px;left:298.30px;transform-origin:0 50%;transform:scaleX(0.9128);-webkit-text-stroke:0.22px #1c1c1c;">Units:</div>
<div class="abs sel" style="left:331.30px;top:174.80px;width:63.90px;height:16.90px;"></div>
<div class="t" style="font-size:9.0px;color:#1c1c1c;top:179.78px;left:334.90px;transform-origin:0 50%;transform:scaleX(0.8711);-webkit-text-stroke:0.22px #1c1c1c;">Inches</div>
<svg style="left:381.10px;top:181.80px;" width="8.299999999999955" height="4.0" viewBox="0 0 8.299999999999955 4.0"><path d="M0 0 L4.15 4.00 L8.30 0" fill="none" stroke="#3a3a3a" stroke-width="0.9" stroke-linecap="round" stroke-linejoin="round"/></svg>
<div class="abs grp" style="left:298.40px;top:206.50px;width:233.40px;height:226.70px;"></div>
<div class="abs " style="left:303.20px;top:205.50px;width:63.50px;height:3.00px;background:#f0f0f0"></div>
<div class="t" style="font-size:9.0px;color:#1c1c1c;top:203.58px;left:305.20px;transform-origin:0 50%;transform:scaleX(0.9288);-webkit-text-stroke:0.22px #1c1c1c;">Margin Controls</div>
<div class="t" style="font-size:9.0px;color:#1c1c1c;top:226.58px;left:309.40px;transform-origin:0 50%;transform:scaleX(0.9280);-webkit-text-stroke:0.22px #1c1c1c;">Apply to:</div>
<div class="abs sel" style="left:351.00px;top:221.20px;width:59.20px;height:17.10px;"></div>
<div class="t" style="font-size:9.0px;color:#1c1c1c;top:226.38px;left:355.20px;transform-origin:0 50%;transform:scaleX(0.8796);-webkit-text-stroke:0.22px #1c1c1c;">CropBox</div>
<svg style="left:396.30px;top:229.00px;" width="7.300000000000011" height="2.9000000000000057" viewBox="0 0 7.300000000000011 2.9000000000000057"><path d="M0 0 L3.65 2.90 L7.30 0" fill="none" stroke="#3a3a3a" stroke-width="0.9" stroke-linecap="round" stroke-linejoin="round"/></svg>
<div class="t" style="font-size:9.0px;color:#1c1c1c;top:252.68px;left:321.39px;transform-origin:100% 50%;transform:scaleX(0.8465);-webkit-text-stroke:0.22px #1c1c1c;">Top:</div>
<div class="abs inp" style="left:347.80px;top:248.10px;width:41.50px;height:16.50px;"></div>
<div class="t" style="font-size:9.0px;color:#080808;top:252.38px;left:349.80px;transform-origin:0 50%;transform:scaleX(0.8930);-webkit-text-stroke:0.3px #080808;">2.655 in</div>
<div class="abs spin" style="left:391.00px;top:248.20px;width:18.00px;height:16.70px;"></div>
<div class="abs " style="left:391.50px;top:255.90px;width:17.00px;height:1.00px;background:#bdbdbd"></div>
<svg style="left:391.00px;top:248.20px;" width="18.0" height="16.69999999999999" viewBox="0 0 18.0 16.69999999999999"><path d="M4.90 5.0 L8.40 0.7 L11.90 5.0 Z" fill="#0c0c0c"/><path d="M4.90 9.8 L8.40 13.7 L11.90 9.8 Z" fill="#0c0c0c"/></svg>
<div class="t" style="font-size:9.0px;color:#1c1c1c;top:279.68px;left:307.39px;transform-origin:100% 50%;transform:scaleX(0.9190);-webkit-text-stroke:0.22px #1c1c1c;">Bottom:</div>
<div class="abs inp" style="left:347.80px;top:275.10px;width:41.50px;height:16.50px;"></div>
<div class="t" style="font-size:9.0px;color:#080808;top:279.38px;left:349.80px;transform-origin:0 50%;transform:scaleX(0.8930);-webkit-text-stroke:0.3px #080808;">8.073 in</div>
<div class="abs spin" style="left:391.00px;top:275.20px;width:18.00px;height:16.70px;"></div>
<div class="abs " style="left:391.50px;top:282.90px;width:17.00px;height:1.00px;background:#bdbdbd"></div>
<svg style="left:391.00px;top:275.20px;" width="18.0" height="16.69999999999999" viewBox="0 0 18.0 16.69999999999999"><path d="M4.90 5.0 L8.40 0.7 L11.90 5.0 Z" fill="#0c0c0c"/><path d="M4.90 9.8 L8.40 13.7 L11.90 9.8 Z" fill="#0c0c0c"/></svg>
<div class="t" style="font-size:9.0px;color:#1c1c1c;top:306.68px;left:320.89px;transform-origin:100% 50%;transform:scaleX(0.8965);-webkit-text-stroke:0.22px #1c1c1c;">Left:</div>
<div class="abs inp" style="left:347.80px;top:302.10px;width:41.50px;height:16.50px;"></div>
<div class="t" style="font-size:9.0px;color:#080808;top:306.38px;left:349.80px;transform-origin:0 50%;transform:scaleX(0.9055);-webkit-text-stroke:0.3px #080808;">0.545 in</div>
<div class="abs spin" style="left:391.00px;top:302.20px;width:18.00px;height:16.70px;"></div>
<div class="abs " style="left:391.50px;top:309.90px;width:17.00px;height:1.00px;background:#bdbdbd"></div>
<svg style="left:391.00px;top:302.20px;" width="18.0" height="16.69999999999999" viewBox="0 0 18.0 16.69999999999999"><path d="M4.90 5.0 L8.40 0.7 L11.90 5.0 Z" fill="#0c0c0c"/><path d="M4.90 9.8 L8.40 13.7 L11.90 9.8 Z" fill="#0c0c0c"/></svg>
<div class="t" style="font-size:9.0px;color:#1c1c1c;top:333.68px;left:314.89px;transform-origin:100% 50%;transform:scaleX(0.9187);-webkit-text-stroke:0.22px #1c1c1c;">Right:</div>
<div class="abs inp" style="left:347.80px;top:329.10px;width:41.50px;height:16.50px;"></div>
<div class="t" style="font-size:9.0px;color:#080808;top:333.38px;left:349.80px;transform-origin:0 50%;transform:scaleX(0.8857);-webkit-text-stroke:0.3px #080808;">5.2 in</div>
<div class="abs spin" style="left:391.00px;top:329.20px;width:18.00px;height:16.70px;"></div>
<div class="abs " style="left:391.50px;top:336.90px;width:17.00px;height:1.00px;background:#bdbdbd"></div>
<svg style="left:391.00px;top:329.20px;" width="18.0" height="16.69999999999999" viewBox="0 0 18.0 16.69999999999999"><path d="M4.90 5.0 L8.40 0.7 L11.90 5.0 Z" fill="#0c0c0c"/><path d="M4.90 9.8 L8.40 13.7 L11.90 9.8 Z" fill="#0c0c0c"/></svg>
<div class="abs cb" style="left:309.20px;top:357.10px;width:15.40px;height:14.80px;"></div>
<div class="t" style="font-size:9.0px;color:#1c1c1c;top:359.38px;left:326.60px;transform-origin:0 50%;transform:scaleX(0.9156);-webkit-text-stroke:0.22px #1c1c1c;">Constrain Proportions</div>
<div class="abs cb" style="left:309.20px;top:379.50px;width:15.40px;height:14.90px;"></div>
<div class="t" style="font-size:9.0px;color:#1c1c1c;top:381.68px;left:326.60px;transform-origin:0 50%;transform:scaleX(0.9152);-webkit-text-stroke:0.22px #1c1c1c;">Remove White Margins</div>
<div class="abs btn" style="left:310.20px;top:406.30px;width:99.20px;height:18.30px;"></div>
<div class="t" style="font-size:9.0px;color:#1c1c1c;top:412.18px;left:339.50px;transform-origin:0 50%;transform:scaleX(0.8844);-webkit-text-stroke:0.22px #1c1c1c;">Set To Zero</div>
<div class="abs btn" style="left:420.40px;top:406.30px;width:99.10px;height:18.30px;"></div>
<div class="t" style="font-size:9.0px;color:#1c1c1c;top:412.18px;left:434.90px;transform-origin:0 50%;transform:scaleX(0.9117);-webkit-text-stroke:0.22px #1c1c1c;">Revert To Selection</div>
<div class="abs " style="left:540.70px;top:168.00px;width:225.10px;height:224.20px;background:#fff"></div>
<div class="abs " style="left:568.40px;top:170.40px;width:170.60px;height:218.20px;border:1px solid #5050a2;box-shadow:0 0 0 0.5px rgba(80,80,165,.35)"></div>
<svg style="left:651.70px;top:181.00px;" width="66.19999999999993" height="100.30000000000001" viewBox="651.7 181.0 66.19999999999993 100.30000000000001">
<defs>
<linearGradient id="vg" x1="0" y1="0" x2="0" y2="1">
<stop offset="0" stop-color="#1f6f9d"/><stop offset="0.5" stop-color="#2177a8"/><stop offset="0.655" stop-color="#2077a8"/><stop offset="0.67" stop-color="#1c6d9d"/><stop offset="1" stop-color="#1a6896"/>
</linearGradient>
<filter id="pb" x="-10%" y="-10%" width="120%" height="120%"><feGaussianBlur stdDeviation="0.6"/></filter>
<clipPath id="vc"><rect x="651.7" y="181.0" width="66.19999999999993" height="100.30000000000001"/></clipPath>
</defs>
<g clip-path="url(#vc)">
<rect x="651.7" y="181.0" width="66.19999999999993" height="100.30000000000001" fill="url(#vg)"/>
<g filter="url(#pb)">
<path d="M690.6 181 V212" stroke="#155a84" stroke-width="2.2"/>
<path d="M692.6 181 V212" stroke="#3383b2" stroke-width="1"/>
<path d="M651 246.8 H719" stroke="#4c9ccb" stroke-width="1.3"/>
<path d="M651 262.3 H719" stroke="#2a7fb0" stroke-width="0.9"/>
<circle cx="713.6" cy="209.6" r="0.8" fill="#124e74"/>
<!-- jacket -->
<path d="M676 231 C671 233 668.5 238 667.5 246 C667 252 667.5 257 670.5 260.5 L673.5 258 L673 273.5 H700.2 L700 258 L703 260.5 C706.5 256 708.6 250 707.6 243 C706.6 236 703 232.4 696.5 230.6 Z" fill="#2f79b8"/>
<path d="M669 240 C668 248 668.5 255 671 259" stroke="#4a95d2" stroke-width="1.6" fill="none"/>
<path d="M706 240 C707.2 247 706 254 703.4 258.6" stroke="#4a95d2" stroke-width="1.6" fill="none"/>
<path d="M677 234 L681.5 250 M697 234 L692.6 250" stroke="#1b5a94" stroke-width="1.1" fill="none"/><path d="M673.4 262 H678.6 M695.4 262 H700" stroke="#1f5f9a" stroke-width="0.9"/>
<!-- hoodie front -->
<path d="M683.2 232.6 L691.4 232.6 L694.6 262 L695.2 268.6 L700.4 269.2 V277.2 H672.6 V269.2 L678.6 268.6 L679.4 262 Z" fill="#9db2c6"/>
<path d="M684.6 236 V250 M688.8 236 V250" stroke="#dfe8ef" stroke-width="0.7"/>
<path d="M672.6 273.4 H700.4" stroke="#8097ad" stroke-width="1"/>
<!-- cuffs -->
<ellipse cx="671.4" cy="256.4" rx="2" ry="2.6" fill="#8ab2d4"/>
<ellipse cx="702.8" cy="256.4" rx="2" ry="2.6" fill="#8ab2d4"/>
<!-- pants -->
<path d="M673.6 277 H697.4 V282 H673.6 Z" fill="#0e1a24"/>
<!-- hood -->
<path d="M683 208.6 C689 206.2 695.6 209.6 697.2 216.6 C698 222 696.4 228 693.8 232.6 L687.4 234 C689 228 688.6 220 686 214.6 C684.6 212 682.6 210.6 681 210.4 Z" fill="#a8bdcd"/>
<path d="M689.6 211 C693.6 214 694.8 222 692.4 231" stroke="#7d95a9" stroke-width="0.9" fill="none"/>
<!-- hair -->
<path d="M683.4 223 C686.4 224 688.6 222 688.6 219 C690 226 689.6 232 687.6 236.6 L683 235 C684 231 684.4 227 683.4 223 Z" fill="#8a4b3c"/>
<!-- face -->
<path d="M680.6 211.6 C683.6 210.4 686.6 212.6 687.4 216.6 C688 220.6 686.6 224.4 683.6 225.6 C681.6 226 680 224.6 679.6 222.6 L678.8 220.4 L679.8 218.6 Z" fill="#e3bda6"/>
<path d="M679.2 215.4 H686.6" stroke="#1a1a22" stroke-width="1.4"/>
<path d="M680.4 221.4 H683" stroke="#f3e8e2" stroke-width="0.9"/>
</g>
</g></svg>

<div class="abs " style="left:580.00px;top:223.00px;width:55.50px;height:7.20px;border:1px solid #111;background:#fff"></div>
<div class="t" style="font-size:3.3px;color:#111;top:226.01px;left:582.00px;transform-origin:0 50%;transform:scaleX(0.9351);font-weight:bold;-webkit-text-stroke:0.22px #111;">UPDF is the Best AI PDF Translator</div>
<div class="t" style="font-size:9.0px;color:#1c1c1c;top:402.98px;left:589.80px;transform-origin:0 50%;transform:scaleX(0.8796);-webkit-text-stroke:0.22px #1c1c1c;">Cropped page size: 2.755 x 0.000 in</div>
<div class="abs grp" style="left:287.40px;top:469.40px;width:261.60px;height:94.60px;"></div>
<div class="abs " style="left:291.50px;top:468.40px;width:69.70px;height:3.00px;background:#f0f0f0"></div>
<div class="t" style="font-size:9.0px;color:#1c1c1c;top:466.08px;left:293.50px;transform-origin:0 50%;transform:scaleX(0.8687);-webkit-text-stroke:0.22px #1c1c1c;">Change Page Size</div>
<div class="abs" style="left:298.10px;top:485.40px;width:14.60px;height:14.60px;border-radius:50%;background:#005fb8"></div>
<div class="abs" style="left:302.70px;top:490.00px;width:5.4px;height:5.4px;border-radius:50%;background:#fff"></div>
<div class="t" style="font-size:9.0px;color:#1c1c1c;top:487.38px;left:315.40px;transform-origin:0 50%;transform:scaleX(0.8620);-webkit-text-stroke:0.22px #1c1c1c;">Fixed Sizes</div>
<div class="t" style="font-size:9.0px;color:#1c1c1c;top:488.68px;left:378.40px;transform-origin:0 50%;transform:scaleX(0.8516);-webkit-text-stroke:0.22px #1c1c1c;">Page Sizes:</div>
<div class="abs sel" style="left:431.20px;top:483.50px;width:92.20px;height:17.60px;"></div>
<div class="t" style="font-size:9.0px;color:#1c1c1c;top:489.08px;left:434.60px;transform-origin:0 50%;transform:scaleX(0.8923);-webkit-text-stroke:0.22px #1c1c1c;">None</div>
<svg style="left:509.20px;top:490.60px;" width="8.400000000000034" height="4.0" viewBox="0 0 8.400000000000034 4.0"><path d="M0 0 L4.20 4.00 L8.40 0" fill="none" stroke="#3a3a3a" stroke-width="0.9" stroke-linecap="round" stroke-linejoin="round"/></svg>
<div class="abs" style="left:298.10px;top:512.80px;width:14.60px;height:14.60px;border-radius:50%;background:#f5f5f5;border:1px solid #606060"></div>
<div class="t" style="font-size:9.0px;color:#1c1c1c;top:514.78px;left:315.40px;transform-origin:0 50%;transform:scaleX(0.9352);-webkit-text-stroke:0.22px #1c1c1c;">Custom</div>
<div class="t" style="font-size:9.0px;color:#1c1c1c;top:516.38px;left:366.60px;transform-origin:0 50%;transform:scaleX(0.9096);-webkit-text-stroke:0.22px #1c1c1c;">Width:</div>
<div class="abs inp dis" style="left:401.60px;top:511.20px;width:44.10px;height:16.80px;"></div>
<div class="t" style="font-size:9.0px;color:#8e8e8e;top:515.58px;left:403.70px;transform-origin:0 50%;transform:scaleX(0.9510);-webkit-text-stroke:0.15px #8e8e8e;">0 in</div>
<div class="t" style="font-size:9.0px;color:#1c1c1c;top:516.38px;left:455.70px;transform-origin:0 50%;transform:scaleX(0.9223);-webkit-text-stroke:0.22px #1c1c1c;">Height:</div>
<div class="abs inp dis" style="left:493.40px;top:511.20px;width:44.00px;height:16.80px;"></div>
<div class="t" style="font-size:9.0px;color:#8e8e8e;top:515.58px;left:495.50px;transform-origin:0 50%;transform:scaleX(0.9510);-webkit-text-stroke:0.15px #8e8e8e;">0 in</div>
<div class="abs " style="left:298.00px;top:540.20px;width:14.80px;height:15.00px;background:#c2c2c2;border-radius:3px"></div>
<svg style="left:298.00px;top:540.20px;" width="14.800000000000011" height="14.800000000000011" viewBox="0 0 14.800000000000011 14.800000000000011"><path d="M4.00 7.84 L6.36 10.06 L11.10 5.18" fill="none" stroke="#fff" stroke-width="1.3" stroke-linecap="round" stroke-linejoin="round"/></svg>
<div class="t" style="font-size:9.0px;color:#8e8e8e;top:542.48px;left:315.40px;transform-origin:0 50%;transform:scaleX(0.8995);-webkit-text-stroke:0.22px #8e8e8e;">Center</div>
<div class="t" style="font-size:9.0px;color:#1c1c1c;top:544.38px;left:362.60px;transform-origin:0 50%;transform:scaleX(0.8810);-webkit-text-stroke:0.22px #1c1c1c;">XOffset:</div>
<div class="abs inp dis" style="left:399.80px;top:538.90px;width:44.00px;height:16.80px;"></div>
<div class="t" style="font-size:9.0px;color:#8e8e8e;top:543.28px;left:401.90px;transform-origin:0 50%;transform:scaleX(0.9510);-webkit-text-stroke:0.15px #8e8e8e;">0 in</div>
<div class="t" style="font-size:9.0px;color:#1c1c1c;top:544.38px;left:453.80px;transform-origin:0 50%;transform:scaleX(0.8965);-webkit-text-stroke:0.22px #1c1c1c;">YOffset:</div>
<div class="abs inp dis" style="left:491.30px;top:538.90px;width:44.00px;height:16.80px;"></div>
<div class="t" style="font-size:9.0px;color:#8e8e8e;top:543.28px;left:493.40px;transform-origin:0 50%;transform:scaleX(0.9510);-webkit-text-stroke:0.15px #8e8e8e;">0 in</div>
<div class="abs grp" style="left:559.00px;top:456.40px;width:156.80px;height:121.90px;"></div>
<div class="abs " style="left:563.90px;top:455.40px;width:47.40px;height:3.00px;background:#f0f0f0"></div>
<div class="t" style="font-size:9.0px;color:#1c1c1c;top:453.48px;left:565.90px;transform-origin:0 50%;transform:scaleX(0.8573);-webkit-text-stroke:0.22px #1c1c1c;">Page Range</div>
<div class="abs" style="left:569.90px;top:472.60px;width:14.60px;height:14.60px;border-radius:50%;background:#f5f5f5;border:1px solid #606060"></div>
<div class="t" style="font-size:9.0px;color:#1c1c1c;top:474.98px;left:587.40px;transform-origin:0 50%;transform:scaleX(0.9597);-webkit-text-stroke:0.22px #1c1c1c;">All</div>
<div class="abs" style="left:569.90px;top:500.40px;width:14.60px;height:14.60px;border-radius:50%;background:#005fb8"></div>
<div class="abs" style="left:574.50px;top:505.00px;width:5.4px;height:5.4px;border-radius:50%;background:#fff"></div>
<div class="t" style="font-size:9.0px;color:#1c1c1c;top:502.38px;left:587.40px;transform-origin:0 50%;transform:scaleX(0.9107);-webkit-text-stroke:0.22px #1c1c1c;">From:</div>
<div class="abs inp" style="left:631.40px;top:498.60px;width:44.50px;height:17.10px;"></div>
<div class="t" style="font-size:9.0px;color:#080808;top:503.18px;left:633.20px;transform-origin:0 50%;-webkit-text-stroke:0.3px #080808;">1</div>
<div class="t" style="font-size:9.0px;color:#1c1c1c;top:531.28px;left:579.10px;transform-origin:0 50%;transform:scaleX(0.8496);-webkit-text-stroke:0.22px #1c1c1c;">To:</div>
<div class="abs inp" style="left:598.40px;top:526.10px;width:44.50px;height:17.00px;"></div>
<div class="t" style="font-size:9.0px;color:#080808;top:530.68px;left:600.20px;transform-origin:0 50%;-webkit-text-stroke:0.3px #080808;">1</div>
<div class="t" style="font-size:9.0px;color:#1c1c1c;top:531.28px;left:652.50px;transform-origin:0 50%;transform:scaleX(0.7861);-webkit-text-stroke:0.22px #1c1c1c;">of 1</div>
<div class="t" style="font-size:9.0px;color:#8e8e8e;top:558.48px;left:570.00px;transform-origin:0 50%;transform:scaleX(0.9423);-webkit-text-stroke:0.22px #8e8e8e;">Apply to:</div>
<div class="abs " style="left:612.90px;top:554.10px;width:91.30px;height:16.10px;background:#f6f6f6;border:1px solid #e4e4e4;border-radius:3px"></div>
<div class="abs " style="left:614.50px;top:555.60px;width:68.50px;height:13.20px;background:#eeeeee"></div>
<div class="t" style="font-size:9.0px;color:#8e8e8e;top:558.68px;left:616.20px;transform-origin:0 50%;transform:scaleX(0.8757);-webkit-text-stroke:0.22px #8e8e8e;">Even and Odd Pag</div>
<svg style="left:690.50px;top:560.50px;" width="8.5" height="3.7000000000000455" viewBox="0 0 8.5 3.7000000000000455"><path d="M0 0 L4.25 3.70 L8.50 0" fill="none" stroke="#a8a8a8" stroke-width="0.9" stroke-linecap="round" stroke-linejoin="round"/></svg>
<div class="abs btn" style="left:656.10px;top:589.30px;width:55.00px;height:18.40px;border-color:#0062b8;"></div>
<div class="t" style="font-size:9.0px;color:#1c1c1c;top:595.08px;left:678.10px;transform-origin:0 50%;transform:scaleX(0.8459);-webkit-text-stroke:0.22px #1c1c1c;">OK</div>
<div class="abs btn" style="left:721.20px;top:589.30px;width:54.50px;height:18.40px;"></div>
<div class="t" style="font-size:9.0px;color:#1c1c1c;top:595.08px;left:736.40px;transform-origin:0 50%;transform:scaleX(0.8816);-webkit-text-stroke:0.22px #1c1c1c;">Cancel</div>

</div>
</body>
</html>
